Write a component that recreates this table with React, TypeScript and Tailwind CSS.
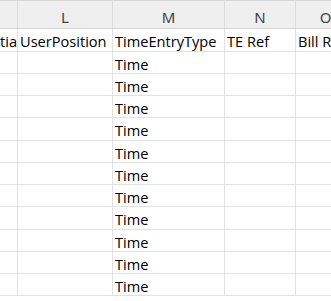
import React from 'react';

const cols = [
  { key: 'K', w: 'w-[18px]', head: '', title: 'tia', clip: true },
  { key: 'L', w: 'w-[95px]', head: 'L', title: 'UserPosition' },
  { key: 'M', w: 'w-[112px]', head: 'M', title: 'TimeEntryType' },
  { key: 'N', w: 'w-[71px]', head: 'N', title: 'TE Ref' },
  { key: 'O', w: 'w-[60px]', head: 'O', title: 'Bill Rate' },
];

const rowHeights = ['h-[22px]', 'h-[22px]', 'h-[22px]', 'h-[23px]', 'h-[22px]', 'h-[22px]', 'h-[22px]', 'h-[23px]', 'h-[22px]', 'h-[22px]', 'h-[22px]'];

export default function App() {
  return (
    <div className="w-[331px] h-[301px] overflow-hidden bg-white font-['Open_Sans',sans-serif]">
      {/* column letters */}
      <div className="flex h-[29px] bg-[#efefef] border-t border-[#d6d6d6] border-b border-b-[#d4d4d4]">
        {cols.map((c) => (
          <div
            key={c.key}
            className={`${c.w} shrink-0 border-r border-[#dcdcdc] flex items-center justify-center pt-[6px] text-[15px] text-[#444444] font-['Noto_Sans',sans-serif]`}
          >
            {c.head}
          </div>
        ))}
      </div>

      {/* header row */}
      <div className="flex h-[23px] border-b border-[#e1e1e1]">
        {cols.map((c) => (
          <div
            key={c.key}
            className={`${c.w} shrink-0 border-r border-[#e1e1e1] overflow-hidden whitespace-nowrap text-[14.6px] leading-[24px] text-black ${c.clip ? 'flex justify-end' : 'pl-[2px]'}`}
          >
            {c.title}
          </div>
        ))}
      </div>

      {rowHeights.map((h, i) => (
        <div key={i} className={`flex ${h} border-b border-[#e1e1e1]`}>
          {cols.map((c) => (
            <div
              key={c.key}
              className={`${c.w} shrink-0 border-r border-[#e1e1e1] whitespace-nowrap text-[14.6px] leading-[24px] text-black pl-[2px]`}
            >
              {c.key === 'M' ? 'Time' : ''}
            </div>
          ))}
        </div>
      ))}
    </div>
  );
}
